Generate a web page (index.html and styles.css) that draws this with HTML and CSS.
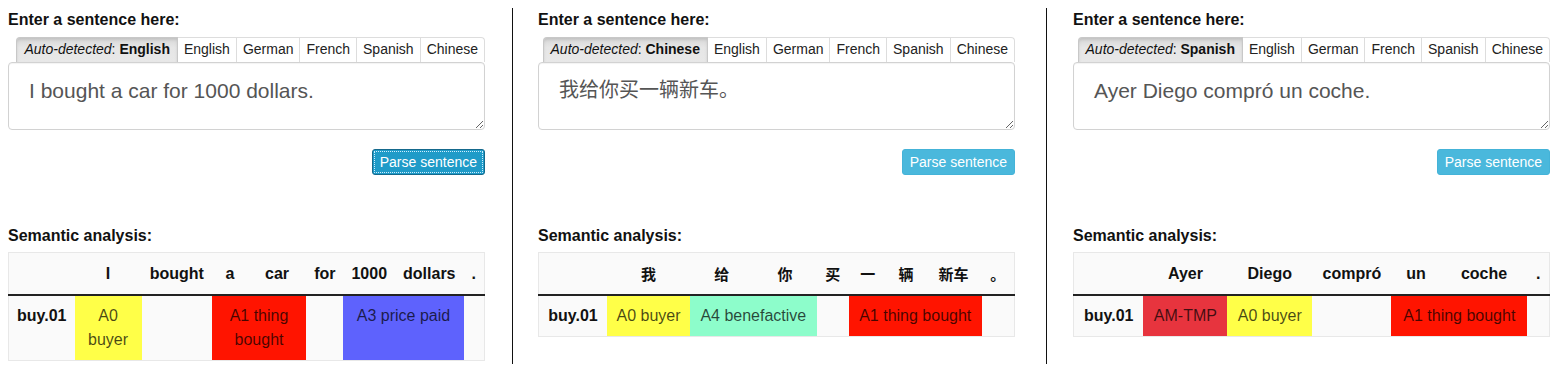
FILE: index.html
```html
<!DOCTYPE html>
<html lang="en">
<head>
    <meta charset="UTF-8">
    <title>Semantic parser demo</title>
    <link rel="stylesheet" href="styles.css">
</head>
<body>
    <div class="page">
        <!-- English -->
        <section class="panel">
            <h2 class="label">Enter a sentence here:</h2>
            <div class="langs">
                <span class="lang active"><i>Auto-detected</i>: <b>English</b></span>
                <span class="lang">English</span>
                <span class="lang">German</span>
                <span class="lang">French</span>
                <span class="lang">Spanish</span>
                <span class="lang">Chinese</span>
            </div>
            <textarea class="sentence">I bought a car for 1000 dollars.</textarea>
            <div class="actions">
                <button class="parse focused">Parse sentence</button>
            </div>
            <h2 class="label result-label">Semantic analysis:</h2>
            <table class="srl">
                <thead>
                    <tr><th></th><th>I</th><th>bought</th><th>a</th><th>car</th><th>for</th><th>1000</th><th>dollars</th><th>.</th></tr>
                </thead>
                <tbody>
                    <tr>
                        <th>buy.01</th>
                        <td class="arg a0">A0 buyer</td>
                        <td></td>
                        <td class="arg a1" colspan="2">A1 thing bought</td>
                        <td></td>
                        <td class="arg a3" colspan="2">A3 price paid</td>
                        <td></td>
                    </tr>
                </tbody>
            </table>
        </section>

        <div class="divider"></div>

        <!-- Chinese -->
        <section class="panel">
            <h2 class="label">Enter a sentence here:</h2>
            <div class="langs">
                <span class="lang active"><i>Auto-detected</i>: <b>Chinese</b></span>
                <span class="lang">English</span>
                <span class="lang">German</span>
                <span class="lang">French</span>
                <span class="lang">Spanish</span>
                <span class="lang">Chinese</span>
            </div>
            <textarea class="sentence zh" lang="zh">我给你买一辆新车。</textarea>
            <div class="actions">
                <button class="parse">Parse sentence</button>
            </div>
            <h2 class="label result-label">Semantic analysis:</h2>
            <table class="srl zh-head">
                <thead>
                    <tr><th></th><th>我</th><th>给</th><th>你</th><th>买</th><th>一</th><th>辆</th><th>新车</th><th>。</th></tr>
                </thead>
                <tbody>
                    <tr>
                        <th>buy.01</th>
                        <td class="arg a0">A0 buyer</td>
                        <td class="arg a4" colspan="2">A4 benefactive</td>
                        <td></td>
                        <td class="arg a1" colspan="3">A1 thing bought</td>
                        <td></td>
                    </tr>
                </tbody>
            </table>
        </section>

        <div class="divider wide"></div>

        <!-- Spanish -->
        <section class="panel">
            <h2 class="label">Enter a sentence here:</h2>
            <div class="langs">
                <span class="lang active"><i>Auto-detected</i>: <b>Spanish</b></span>
                <span class="lang">English</span>
                <span class="lang">German</span>
                <span class="lang">French</span>
                <span class="lang">Spanish</span>
                <span class="lang">Chinese</span>
            </div>
            <textarea class="sentence" lang="es">Ayer Diego compró un coche.</textarea>
            <div class="actions">
                <button class="parse">Parse sentence</button>
            </div>
            <h2 class="label result-label">Semantic analysis:</h2>
            <table class="srl">
                <thead>
                    <tr><th></th><th>Ayer</th><th>Diego</th><th>compró</th><th>un</th><th>coche</th><th>.</th></tr>
                </thead>
                <tbody>
                    <tr>
                        <th>buy.01</th>
                        <td class="arg tmp">AM-TMP</td>
                        <td class="arg a0">A0 buyer</td>
                        <td></td>
                        <td class="arg a1" colspan="2">A1 thing bought</td>
                        <td></td>
                    </tr>
                </tbody>
            </table>
        </section>
    </div>
</body>
</html>
```

FILE: styles.css
```css
body {
    margin: 8px;
    font-family: "Liberation Sans", Arial, "Noto Sans CJK SC", sans-serif;
    color: #333;
    background: #fff;
}

.page {
    display: flex;
    align-items: stretch;
}

.panel {
    width: 477px;
    padding-bottom: 3px;
}

.divider {
    width: 1px;
    background: #111;
    margin: 0 25px 0 27px;
}

.divider.wide {
    margin: 0 26px 0 31px;
}

.label {
    font-size: 16px;
    line-height: 20px;
    font-weight: bold;
    color: #111;
    margin: 2px 0 7px;
}

.result-label {
    margin-top: 51px;
    margin-bottom: 6px;
}

/* language tabs sit on top of the textarea, right aligned */
.langs {
    display: flex;
    justify-content: flex-end;
}

.lang {
    font-size: 14px;
    line-height: 17px;
    padding: 3px 6px 4px;
    border: 1px solid #ddd;
    border-bottom: none;
    border-left: none;
    background: #fff;
    color: #222;
}

.lang:first-child {
    border-left: 1px solid #ccc;
    border-top-left-radius: 4px;
    padding: 3px 7px 4px;
}

.lang:last-child {
    border-top-right-radius: 4px;
}

.lang.active {
    background: linear-gradient(#d8d8d8, #e6e6e6 40%, #e8e8e8);
    border-color: #c8c8c8;
    box-shadow: inset 0 2px 3px rgba(0, 0, 0, 0.1);
    color: #111;
}

.sentence {
    display: block;
    box-sizing: border-box;
    width: 100%;
    height: 68px;
    margin: 0;
    padding: 14px 20px;
    border: 1px solid #d2d2d2;
    border-radius: 4px;
    box-shadow: inset 0 1px 1px rgba(0, 0, 0, 0.05);
    font-family: "Liberation Sans", Arial, "Noto Sans CJK SC", sans-serif;
    font-size: 21px;
    line-height: 27px;
    color: #555;
}

.sentence.zh {
    font-size: 20px;
}

.actions {
    display: flex;
    justify-content: flex-end;
    margin-top: 19px;
}

.parse {
    height: 26px;
    padding: 0 7px;
    font-family: "Liberation Sans", Arial, sans-serif;
    font-size: 14px;
    color: #fff;
    background: #4ab8dc;
    border: 1px solid #44b3d8;
    border-radius: 3px;
    cursor: pointer;
}

.parse.focused {
    background: #1f9bc8;
    border-color: #15698c;
    outline: 1px dotted #cfefff;
    outline-offset: -3px;
}

/* semantic role table */
.srl {
    width: 100%;
    border-collapse: collapse;
    background: #fafafa;
    border: 1px solid #e8e8e8;
    font-size: 16px;
    line-height: 24px;
}

.srl th,
.srl td {
    padding: 8px;
    text-align: center;
    vertical-align: top;
}

.srl thead th {
    padding: 9px 8px 8px;
    border-bottom: 2px solid #222;
    color: #111;
}

.srl tbody th {
    color: #111;
}

.zh-head thead th {
    font-family: "Noto Sans CJK SC", sans-serif;
    font-size: 15px;
}

.arg {
    color: rgba(0, 0, 0, 0.72);
}

.a0 { background: #ffff48; }
.a1 { background: #ff1400; }
.a3 { background: #5e62fd; }
.a4 { background: #8dfdcb; }
.tmp { background: #e7343e; }
```
